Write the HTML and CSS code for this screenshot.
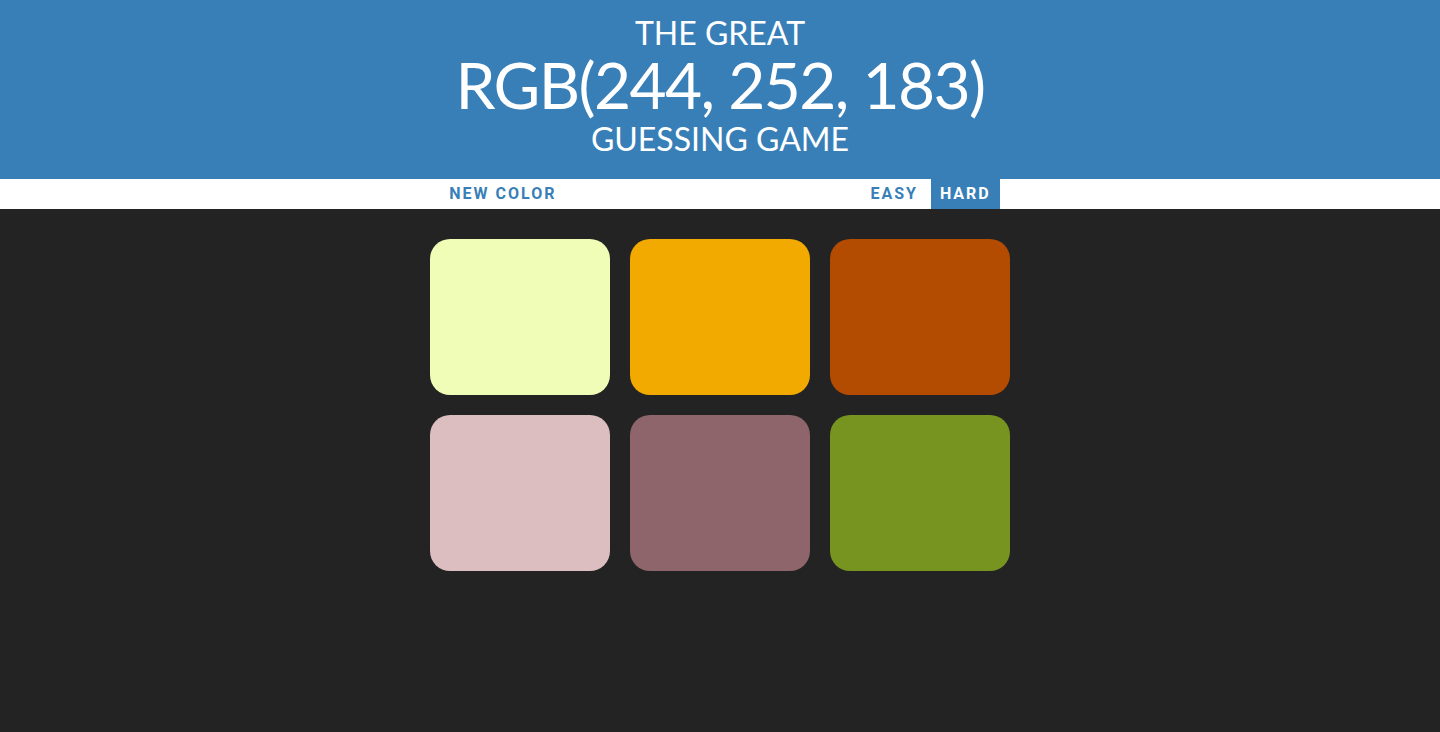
FILE: index.html
```html
<!DOCTYPE html>
<html>
<head>
    <title>Color Game</title>
    <link rel="stylesheet" href="styles.css">
</head>
<body>
    <h1 class="title">
        The Great
        <span class="color-display">RGB(244, 252, 183)</span>
        Guessing Game
    </h1>

    <div class="stripe">
        <button class="btn reset">New Color</button>
        <span class="message"></span>
        <button class="btn mode">Easy</button>
        <button class="btn mode selected">Hard</button>
    </div>

    <div class="board">
        <div class="square" style="background: rgb(239, 253, 182);"></div>
        <div class="square" style="background: rgb(242, 169, 0);"></div>
        <div class="square" style="background: rgb(179, 76, 0);"></div>
        <div class="square" style="background: rgb(220, 189, 192);"></div>
        <div class="square" style="background: rgb(141, 101, 106);"></div>
        <div class="square" style="background: rgb(118, 148, 31);"></div>
    </div>
</body>
</html>
```

FILE: styles.css
```css
body {
    background-color: #232323;
    margin: 0;
    font-family: "Lato", sans-serif;
}

.title {
    text-align: center;
    color: white;
    background: #387fb8;
    margin: 0;
    padding: 15px 0 23px;
    font-weight: normal;
    font-size: 32px;
    line-height: 1.1;
    text-transform: uppercase;
}

.color-display {
    display: block;
    font-size: 200%;
    letter-spacing: -1.6px;
}

.stripe {
    background: white;
    height: 30px;
    text-align: center;
    font-family: "Roboto", sans-serif;
    font-size: 16px;
}

.message {
    display: inline-block;
    width: 20%;
}

.btn {
    border: none;
    background: none;
    text-transform: uppercase;
    height: 100%;
    font-family: "Roboto", sans-serif;
    font-weight: 700;
    font-size: 16px;
    letter-spacing: 2px;
    color: #387fb8;
    padding: 0 9px;
    margin: 0;
    outline: none;
    cursor: pointer;
    vertical-align: top;
}

.btn:hover,
.selected {
    color: white;
    background: #387fb8;
}

.board {
    display: grid;
    grid-template-columns: repeat(3, 180px);
    gap: 20px;
    justify-content: center;
    margin: 30px auto 0;
}

.square {
    height: 156px;
    border-radius: 20px;
}
```
